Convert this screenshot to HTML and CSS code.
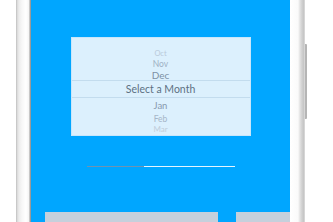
FILE: index.html
```html
<!DOCTYPE html>
<html>
    <head>
        <title>Month picker</title>
        <link rel="stylesheet" href="styles.css">
    </head>
    <body>
        <div class="device">
            <div class="bezel-left"></div>
            <div class="screen">
                <div class="picker">
                    <div class="row row-far">Oct</div>
                    <div class="row row-near">Nov</div>
                    <div class="row row-next">Dec</div>
                    <div class="row row-selected">Select a Month</div>
                    <div class="row row-after">Jan</div>
                    <div class="row row-near2">Feb</div>
                    <div class="row row-far2">Mar</div>
                </div>
                <div class="progress">
                    <span class="progress-done"></span>
                    <span class="progress-left"></span>
                </div>
                <div class="buttons">
                    <div class="btn btn-main"></div>
                    <div class="btn btn-side"></div>
                </div>
            </div>
            <div class="bezel-right">
                <span class="side-button"></span>
            </div>
        </div>
    </body>
</html>
```

FILE: styles.css
```css
html, body {
    margin: 0;
    padding: 0;
    background: #ffffff;
}
body {
    width: 333px;
    height: 222px;
    overflow: hidden;
    font-family: Lato, "Open Sans", sans-serif;
}

.device {
    display: flex;
    margin-left: 16px;
    width: 290px;
    height: 222px;
}
.bezel-left {
    width: 15px;
    background: linear-gradient(to right, #b9b9b9 0, #d8d8d8 1px, #ececec 3px, #f7f7f7 6px, #ffffff 10px, #f4f4f4 13px, #9a9a9a 14px, #9a9a9a 15px);
}
.bezel-right {
    position: relative;
    width: 15px;
    background: linear-gradient(to right, #ffffff 0, #fafafa 8px, #e2e2e2 10px, #d0d0d0 12px, #c4c4c4 14px, #e8e8e8 15px);
}
.side-button {
    position: absolute;
    left: 15px;
    top: 44px;
    width: 2px;
    height: 75px;
    background: #b5b5b5;
    border-radius: 0 1px 1px 0;
}

.screen {
    width: 259px;
    height: 222px;
    overflow: hidden;
    background: #00a6ff;
    display: flex;
    flex-direction: column;
    align-items: center;
}

.picker {
    margin-top: 37px;
    width: 180px;
    height: 104px;
    box-sizing: border-box;
    padding-top: 11px;
    background: #dcf0fd;
    border: 1px solid #c8e6fb;
    display: flex;
    flex-direction: column;
    text-align: center;
}
.row {
    line-height: 10px;
    height: 10px;
}
.row-far {
    font-size: 7.5px;
    color: #b9c9d9;
}
.row-near {
    font-size: 8.5px;
    color: #9fb1c4;
}
.row-next {
    height: 11px;
    line-height: 12px;
    font-size: 10px;
    color: #7d90a5;
}
.row-selected {
    height: 16px;
    line-height: 16px;
    font-size: 10.5px;
    color: #5d7083;
    border-top: 1px solid #c3dcee;
    border-bottom: 1px solid #c3dcee;
}
.row-after {
    height: 15px;
    line-height: 16px;
    font-size: 9.5px;
    color: #8799ae;
}
.row-near2 {
    height: 11px;
    line-height: 12px;
    font-size: 8.5px;
    color: #a6b6c8;
}
.row-far2 {
    font-size: 8px;
    color: #c0cdda;
}

.progress {
    margin-top: 30px;
    width: 148px;
    height: 1px;
    display: flex;
}
.progress-done {
    width: 57px;
    background: #6f93b0;
}
.progress-left {
    flex: 1;
    background: #e4f4ff;
}

.buttons {
    margin-top: 45px;
    align-self: flex-start;
    margin-left: 14px;
    display: flex;
    gap: 18px;
}
.btn {
    height: 10px;
    background: #c5d0dc;
}
.btn-main {
    width: 173px;
}
.btn-side {
    width: 80px;
}
```
